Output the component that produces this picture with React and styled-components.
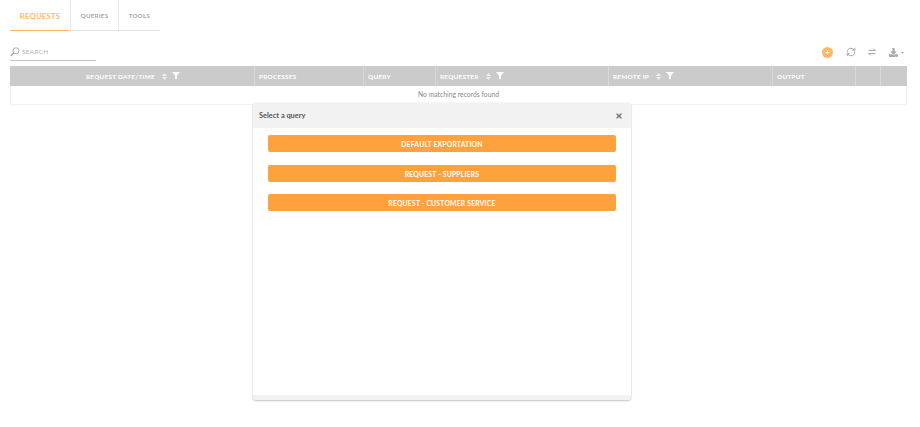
import React from 'react';
import styled, { createGlobalStyle } from 'styled-components';
import { LuRefreshCw } from 'react-icons/lu';
import { FaPlus, FaTimes, FaDownload, FaCaretDown } from 'react-icons/fa';

const Global = createGlobalStyle`
  html, body { margin: 0; padding: 0; background: #fff; }
  body { font-family: "Lato", "Open Sans", sans-serif; }
`;

const Page = styled.div`
  position: relative;
  width: 920px;
  height: 427px;
  overflow: hidden;
  padding: 0 13px 0 10px;
  box-sizing: border-box;
`;

const Tabs = styled.div`
  display: flex;
  width: 150px;
  height: 31px;
  border-bottom: 1px solid #e4e4e4;
  box-sizing: border-box;
`;

const Tab = styled.div`
  width: ${(p) => p.$width}px;
  box-sizing: border-box;
  height: ${(p) => (p.$active ? 31 : 30)}px;
  padding-top: ${(p) => (p.$active ? 12 : 11)}px;
  text-align: center;
  font-size: ${(p) => (p.$active ? 7.6 : 6.1)}px;
  line-height: 9px;
  font-weight: 700;
  letter-spacing: 0.3px;
  color: ${(p) => (p.$active ? '#ffb866' : '#a6a6a6')};
  border-bottom: ${(p) => (p.$active ? '1px solid #ffb866' : 'none')};
  border-right: ${(p) => (p.$last ? 'none' : '1px solid #e8e8e8')};
`;

const Toolbar = styled.div`
  display: flex;
  justify-content: space-between;
  align-items: flex-start;
  margin-top: 13px;
  height: 22px;
`;

const Search = styled.div`
  display: flex;
  align-items: center;
  gap: 2px;
  width: 86px;
  height: 17px;
  padding-bottom: 1px;
  box-sizing: border-box;
  border-bottom: 1px solid #c4c4c4;
  font-size: 6.4px;
  letter-spacing: 0.3px;
  color: #b4b4b4;
`;

const Tools = styled.div`
  display: flex;
  align-items: center;
  height: 16px;
`;

const AddBadge = styled.div`
  display: flex;
  align-items: center;
  justify-content: center;
  width: 11px;
  height: 11px;
  border-radius: 50%;
  background: #ffb866;
  color: #fff;
  margin-right: 13px;
`;

const ToolIcon = styled.div`
  display: flex;
  align-items: center;
  color: #a8a8a8;
  margin-right: ${(p) => p.$gap}px;
`;

const Row = styled.div`
  display: grid;
  grid-template-columns: 245px 109px 72px 173px 164px 83px 25px 26px;
  width: 897px;
`;

const HeadRow = styled(Row)`
  height: 20px;
  background: #cbcbcb;
`;

const HeadCell = styled.div`
  display: flex;
  align-items: center;
  box-sizing: border-box;
  height: 20px;
  padding-left: ${(p) => p.$pad ?? 4}px;
  font-size: 6.4px;
  font-weight: 700;
  letter-spacing: 0.25px;
  white-space: nowrap;
  color: #fff;
  border-right: ${(p) => (p.$last ? 'none' : '1px solid #d9d9d9')};
`;

const SortMark = styled.svg`
  width: 5px;
  height: 7px;
  margin-left: 7px;
  fill: #eee;
`;

const FunnelMark = styled.svg`
  width: 8px;
  height: 7px;
  margin: -1px 0 0 5px;
  fill: #fff;
`;

const EmptyRow = styled.div`
  width: 897px;
  height: 19px;
  box-sizing: border-box;
  border: 1px solid #f2f2f2;
  border-top: none;
  text-align: center;
  font-size: 6.8px;
  line-height: 17px;
  color: #8a8a8a;
`;

const Modal = styled.div`
  position: absolute;
  left: 253px;
  top: 103px;
  width: 378px;
  height: 297px;
  display: flex;
  flex-direction: column;
  background: #fff;
  border-radius: 3px;
  box-shadow: 0 0 1px rgba(0, 0, 0, 0.25), 0 1px 2px rgba(0, 0, 0, 0.22);
`;

const ModalHead = styled.div`
  display: flex;
  justify-content: space-between;
  align-items: center;
  height: 25px;
  padding: 0 8px 0 6px;
  background: #f2f2f2;
  font-size: 7.4px;
  font-weight: 700;
  color: #555;
`;

const Close = styled(FaTimes)`
  width: 8px;
  height: 8px;
  color: #777;
`;

const ModalBody = styled.div`
  flex: 1;
  display: flex;
  flex-direction: column;
  gap: 12.5px;
  padding: 7px 15px 0;
`;

const QueryButton = styled.div`
  height: 17px;
  border-radius: 2px;
  background: #ffa23e;
  text-align: center;
  font-size: 6.8px;
  line-height: 18px;
  font-weight: 700;
  letter-spacing: 0.2px;
  color: #fff;
`;

const ModalFoot = styled.div`
  height: 5px;
  background: #f2f2f2;
  border-radius: 0 0 3px 3px;
`;

const SearchGlass = () => (
  <svg width="10" height="10" viewBox="0 0 10 10" fill="none" stroke="#a5a5a5">
    <circle cx="6" cy="3.8" r="3" strokeWidth="0.9" />
    <path d="M3.8 6 L0.8 9" strokeWidth="1.3" />
  </svg>
);

const SwapIcon = () => (
  <svg width="8" height="8" viewBox="0 0 8 8" fill="none" stroke="currentColor" strokeWidth="1">
    <path d="M0.5 2.5 H7.5 M5.5 0.8 L7.5 2.5" />
    <path d="M7.5 5.5 H0.5 M2.5 7.2 L0.5 5.5" />
  </svg>
);

const columns = [
  { label: 'REQUEST DATE/TIME', pad: 76, controls: true },
  { label: 'PROCESSES' },
  { label: 'QUERY' },
  { label: 'REQUESTER', controls: true },
  { label: 'REMOTE IP', controls: true },
  { label: 'OUTPUT' },
  { label: '' },
  { label: '', last: true },
];

const queries = ['DEFAULT EXPORTATION', 'REQUEST - SUPPLIERS', 'REQUEST - CUSTOMER SERVICE'];

export default function App() {
  return (
    <Page>
      <Global />
      <Tabs>
        <Tab $active $width={61}>REQUESTS</Tab>
        <Tab $width={48}>QUERIES</Tab>
        <Tab $width={41} $last>TOOLS</Tab>
      </Tabs>
      <Toolbar>
        <Search>
          <SearchGlass />
          SEARCH
        </Search>
        <Tools>
          <AddBadge><FaPlus size={5} /></AddBadge>
          <ToolIcon $gap={12}><LuRefreshCw size={10} strokeWidth={2.4} /></ToolIcon>
          <ToolIcon $gap={13}><SwapIcon /></ToolIcon>
          <ToolIcon $gap={2}>
            <FaDownload size={9} />
            <FaCaretDown size={5} style={{ marginLeft: 2 }} />
          </ToolIcon>
        </Tools>
      </Toolbar>
      <HeadRow>
        {columns.map((col, i) => (
          <HeadCell key={i} $pad={col.pad} $last={col.last}>
            {col.label}
            {col.controls && (
              <SortMark viewBox="0 0 5 7">
                <path d="M2.5 0 L5 3 H0 Z M2.5 7 L0 4 H5 Z" />
              </SortMark>
            )}
            {col.controls && (
              <FunnelMark viewBox="0 0 8 7">
                <path d="M0 0 H8 L5 3.5 V7 H3 V3.5 Z" />
              </FunnelMark>
            )}
          </HeadCell>
        ))}
      </HeadRow>
      <EmptyRow>No matching records found</EmptyRow>
      <Modal>
        <ModalHead>
          Select a query
          <Close />
        </ModalHead>
        <ModalBody>
          {queries.map((q) => (
            <QueryButton key={q}>{q}</QueryButton>
          ))}
        </ModalBody>
        <ModalFoot />
      </Modal>
    </Page>
  );
}
